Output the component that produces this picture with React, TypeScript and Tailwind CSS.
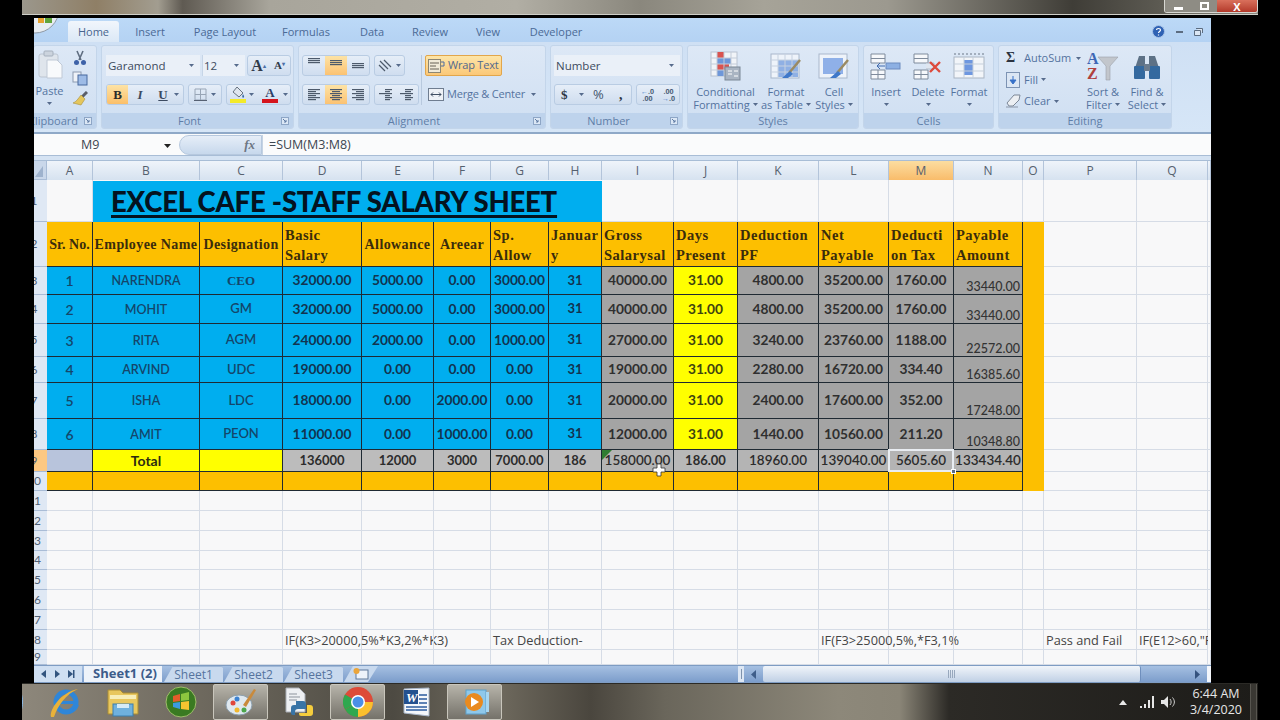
import React from 'react';

const Caret = ({ className = '' }: { className?: string }) => (
  <svg width="5" height="3" viewBox="0 0 5 3" className={className}>
    <path d="M0 0h5L2.5 3z" fill="#566b8c" />
  </svg>
);

const Launcher = () => (
  <svg width="8" height="8" viewBox="0 0 8 8">
    <rect x=".5" y=".5" width="7" height="7" fill="#dbe7f5" stroke="#8ea6c6" />
    <path d="M2 2l3 3M5 3v2H3" stroke="#5f7ba3" fill="none" />
  </svg>
);

const Group = ({
  w,
  label,
  labelClass = 'flex-1 text-center',
  launcher,
  children,
}: {
  w: string;
  label: string;
  labelClass?: string;
  launcher?: boolean;
  children: React.ReactNode;
}) => (
  <div className={`${w} flex h-[84px] shrink-0 flex-col overflow-hidden rounded-[3px] border border-[#c3d5ea] bg-gradient-to-b from-[#dde8f6] to-[#cfdff2]`}>
    <div className="h-[67px] shrink-0">{children}</div>
    <div className="flex h-[15px] items-center justify-between gap-1 bg-[#bed3ec] pt-[1px] text-[11px] text-[#5f7ea8]">
      <span className={labelClass}>{label}</span>
      {launcher && <span className="mr-1 flex"><Launcher /></span>}
    </div>
  </div>
);

// three or so horizontal strokes used by the alignment buttons
const Lines = ({ rows, dark = '#4d5a6b' }: { rows: [number, number][]; dark?: string }) => (
  <svg width="14" height="12" viewBox="0 0 14 12">
    {rows.map(([x, w], i) => (
      <rect key={i} x={x} y={i * 2} width={w} height="1.2" fill={dark} />
    ))}
  </svg>
);

const ToolBox = ({ w, children }: { w: string; children: React.ReactNode }) => (
  <div className={`${w} flex h-[21px] shrink-0 items-center overflow-hidden rounded-[3px] border border-[#b9cce3] bg-gradient-to-b from-[#e6eef8] to-[#cfddef]`}>
    {children}
  </div>
);

const Big = ({ w, l1, l2, icon, caret }: { w: string; l1: string; l2?: string; icon: React.ReactNode; caret?: boolean }) => (
  <div className={`${w} flex flex-col items-center text-[11px] leading-[13px] text-[#54739f]`}>
    <div className="flex h-[36px] items-center justify-center pb-[3px]">{icon}</div>
    <span className="whitespace-nowrap">{l1}</span>
    {l2 ? (
      <span className="flex items-center gap-[3px] whitespace-nowrap">
        {l2}
        {caret && <Caret />}
      </span>
    ) : (
      <span className="flex h-[13px] items-center"><Caret /></span>
    )}
  </div>
);

const BrushTable = ({ fill = true }: { fill?: boolean }) => (
  <svg width="32" height="28" viewBox="0 0 32 28">
    <rect x="1" y="2" width="28" height="24" fill="#eef3fa" stroke="#a9b8cc" />
    {fill ? (
      <>
        <rect x="8" y="8" width="20" height="17" fill="#8fb0e4" />
        <path d="M1 8h28M1 14h28M1 20h28M8 2v24M15 2v24M22 2v24" stroke="#c6d1e0" />
      </>
    ) : (
      <rect x="5" y="6" width="20" height="16" fill="#8fb0e8" />
    )}
    <path d="M30 8L19 21" stroke="#9a8a63" strokeWidth="2.5" />
    <path d="M20 19l3 3-5 4h-6z" fill="#3f78c9" />
  </svg>
);

const Ribbon = () => (
  <div className="flex h-[90px] shrink-0 gap-[4px] bg-gradient-to-b from-[#cfe0f4] to-[#d6e6f7] pt-[3px] text-[11px]">
    <Group w="w-[64px] -ml-[1px]" label="Clipboard" labelClass="flex w-[44px] flex-none justify-end whitespace-nowrap" launcher>
      <div className="flex h-full pt-[4px]">
        <div className="flex w-[31px] flex-col items-center text-[11px] leading-[13px] text-[#54739f]">
          <svg width="28" height="30" viewBox="0 0 28 30">
            <rect x="3" y="4" width="19" height="23" rx="2" fill="#dfe5ec" stroke="#bcc5d1" />
            <rect x="8" y="1" width="9" height="5" rx="1" fill="#ccd4de" stroke="#a6b0bd" />
            <path d="M11 10h10l5 5v13H11z" fill="#f8fafc" stroke="#c0c9d6" />
          </svg>
          <span className="mt-[4px]">Paste</span>
          <Caret className="mt-[5px]" />
        </div>
        <div className="flex flex-col items-center gap-[5px] pl-[7px]">
          <svg width="16" height="16" viewBox="0 0 16 16">
            <path d="M5 1l4 9M11 1l-4 9" stroke="#5f6d80" strokeWidth="1.6" />
            <circle cx="4.5" cy="12.5" r="2.5" fill="#3e62a8" />
            <circle cx="11.5" cy="12.5" r="2.5" fill="#3e62a8" />
          </svg>
          <svg width="16" height="15" viewBox="0 0 16 15">
            <rect x="1" y="1" width="8" height="10" fill="#eef2f8" stroke="#8b9ab0" />
            <rect x="6" y="4" width="9" height="10" fill="#9dbbe6" stroke="#47689e" />
          </svg>
          <svg width="16" height="16" viewBox="0 0 16 16">
            <path d="M15 1L9 7" stroke="#5b5f68" strokeWidth="3" />
            <path d="M9 4l4 4-4 6-8-2c3-1 5-4 8-8z" fill="#e5c65c" stroke="#a78f3a" strokeWidth=".6" />
          </svg>
        </div>
      </div>
    </Group>

    <Group w="w-[193px]" label="Font" launcher>
      <div className="flex flex-col gap-[8px] pl-[4px] pt-[9px]">
        <div className="flex gap-[2px]">
          <div className="flex h-[21px] w-[94px] items-center justify-between bg-[#eaf0f8] pl-[2px] pr-[6px] text-[11.5px] text-[#3d4b5e]">
            Garamond <Caret />
          </div>
          <div className="flex h-[21px] w-[43px] items-center justify-between border-l border-[#c6d5e7] bg-[#eaf0f8] pl-[1px] pr-[6px] text-[11.5px] text-[#3d4b5e]">
            12 <Caret />
          </div>
          <ToolBox w="w-[44px]">
            <span className="flex-1 text-center font-['Liberation_Serif',serif] text-[16px] font-bold leading-none text-[#2f3a4a]">A<sup className="text-[6px] text-[#4a6fa8]">▴</sup></span>
            <span className="flex-1 text-center font-['Liberation_Serif',serif] text-[11px] font-bold leading-none text-[#2f3a4a]">A<sup className="text-[6px] text-[#4a6fa8]">▾</sup></span>
          </ToolBox>
        </div>
        <div className="flex gap-[4px]">
          <ToolBox w="w-[78px]">
            <span className="flex h-full w-[21px] items-center justify-center bg-gradient-to-b from-[#fde3a5] to-[#fbbf69] font-['Liberation_Serif',serif] text-[13px] font-bold text-[#2c2c2c]">B</span>
            <span className="w-[24px] text-center font-['Liberation_Serif',serif] text-[13px] font-bold italic text-[#3c4a60]">I</span>
            <span className="w-[22px] text-center font-['Liberation_Serif',serif] text-[13px] font-bold text-[#3c4a60] underline">U</span>
            <Caret />
          </ToolBox>
          <ToolBox w="w-[34px]">
            <svg width="13" height="13" viewBox="0 0 13 13" className="ml-[5px] mr-[4px]">
              <path d="M1 1h11v11H1zM1 6.500h11M6.500 1v11" fill="none" stroke="#98a5b6" />
              <path d="M0 12.500h13" stroke="#566173" />
            </svg>
            <Caret />
          </ToolBox>
          <ToolBox w="w-[65px]">
            <svg width="16" height="17" viewBox="0 0 16 17" className="ml-[3px] mr-[3px]">
              <path d="M7 1l6 6-4 4-6-5z" fill="#dfe6ef" stroke="#66727f" />
              <path d="M13 8c1 2 2 3 0 4-1-1-1-2 0-4z" fill="#3a6ea8" />
              <rect x="0" y="13" width="16" height="4" fill="#f3ea29" />
            </svg>
            <Caret />
            <span className="ml-[8px] flex w-[16px] flex-col items-center font-['Liberation_Serif',serif] text-[13px] font-bold leading-[13px] text-[#2c3e66]">
              A<span className="h-[4px] w-[16px] bg-[#d5141c]" />
            </span>
            <Caret className="ml-[5px]" />
          </ToolBox>
        </div>
      </div>
    </Group>

    <Group w="w-[248px]" label="Alignment" launcher>
      <div className="flex pl-[3px] pt-[9px]">
        <div className="flex w-[117px] shrink-0 flex-col gap-[8px]">
          <div className="flex gap-[4px]">
            <ToolBox w="w-[68px]">
              <span className="flex h-full w-[22px] items-start justify-center pt-[2px]"><Lines rows={[[1, 12], [1, 12], [1, 12]]} /></span>
              <span className="flex h-full w-[23px] items-center justify-center bg-gradient-to-b from-[#fde3a5] to-[#fbc272]"><Lines rows={[[1, 12], [1, 12], [1, 12]]} /></span>
              <span className="flex h-full w-[22px] items-end justify-center"><Lines rows={[[1, 12], [1, 12], [1, 12]]} /></span>
            </ToolBox>
            <ToolBox w="w-[31px]">
              <svg width="15" height="13" viewBox="0 0 15 13" className="ml-[3px] mr-[3px]">
                <path d="M2 2l8 8M1 6l6 6M6 1l7 7" stroke="#4d5a6b" strokeWidth="1.2" />
              </svg>
              <Caret />
            </ToolBox>
          </div>
          <div className="flex gap-[4px]">
            <ToolBox w="w-[68px]">
              <span className="flex h-full w-[22px] items-center justify-center"><Lines rows={[[1, 12], [1, 8], [1, 12], [1, 8], [1, 12], [1, 8]]} /></span>
              <span className="flex h-full w-[23px] items-center justify-center bg-gradient-to-b from-[#fde3a5] to-[#fbc272]"><Lines rows={[[1, 12], [3, 8], [1, 12], [3, 8], [1, 12], [3, 8]]} /></span>
              <span className="flex h-full w-[22px] items-center justify-center"><Lines rows={[[1, 12], [5, 8], [1, 12], [5, 8], [1, 12], [5, 8]]} /></span>
            </ToolBox>
            <ToolBox w="w-[45px]">
              <span className="flex w-[22px] justify-center"><Lines rows={[[6, 7], [6, 5], [0, 13], [6, 5], [6, 7], [6, 5]]} /></span>
              <span className="flex w-[22px] justify-center"><Lines rows={[[5, 8], [5, 6], [0, 13], [5, 6], [5, 8], [5, 6]]} /></span>
            </ToolBox>
          </div>
        </div>
        <span className="ml-[2px] h-[50px] w-px shrink-0 bg-[#b8c9de]" />
        <div className="ml-[3px] flex flex-col gap-[8px]">
          <div className="flex h-[21px] w-[77px] items-center gap-[3px] rounded-[2px] border border-[#e2a64b] bg-gradient-to-b from-[#fde5a8] to-[#fbc878] pl-[2px] text-[11px] tracking-[-0.2px] text-[#51698d]">
            <svg width="17" height="14" viewBox="0 0 17 14">
              <rect x=".5" y=".5" width="12" height="13" fill="#efe9d8" stroke="#8d8672" />
              <path d="M2 4h9M2 7h6M2 10h9" stroke="#676157" />
              <path d="M13 3h3v4h-3" fill="none" stroke="#4d6da3" />
            </svg>
            Wrap Text
          </div>
          <div className="flex h-[21px] items-center gap-[3px] whitespace-nowrap pl-[3px] text-[11px] tracking-[-0.2px] text-[#54739f]">
            <svg width="16" height="13" viewBox="0 0 16 13">
              <rect x=".5" y=".5" width="15" height="12" fill="#eef1f6" stroke="#6f7d90" />
              <path d="M3 6.500h10M5 4.500L3 6.500l2 2M11 4.500l2 2-2 2" fill="none" stroke="#3f4d62" />
            </svg>
            Merge &amp; Center
            <Caret className="ml-[3px]" />
          </div>
        </div>
      </div>
    </Group>

    <Group w="w-[133px]" label="Number" launcher>
      <div className="flex flex-col gap-[8px] pl-[3px] pt-[9px]">
        <div className="flex h-[21px] w-[126px] items-center justify-between bg-[#eaf0f8] pl-[2px] pr-[6px] text-[11.5px] text-[#3d4b5e]">
          Number <Caret />
        </div>
        <div className="flex gap-[4px]">
          <ToolBox w="w-[78px]">
            <span className="ml-[6px] w-[18px] font-['Liberation_Serif',serif] text-[13px] font-bold text-[#2c3644]">$</span>
            <Caret />
            <span className="ml-[9px] w-[26px] text-[13px] text-[#41536b]">%</span>
            <span className="font-['Liberation_Serif',serif] text-[14px] font-bold text-[#2c3644]">,</span>
          </ToolBox>
          <ToolBox w="w-[44px]">
            <span className="w-[22px] text-center text-[7px] font-bold leading-[7px] text-[#4c6078]"><span className="text-[#4f80c9]">←</span>.0<br />.00</span>
            <span className="w-[22px] text-center text-[7px] font-bold leading-[7px] text-[#4c6078]">.00<br /><span className="text-[#4f80c9]">→</span>.0</span>
          </ToolBox>
        </div>
      </div>
    </Group>

    <Group w="w-[172px]" label="Styles">
      <div className="flex pl-[5px] pt-[3px]">
        <Big w="w-[65px]" l1="Conditional" l2="Formatting" caret icon={
          <svg width="32" height="30" viewBox="0 0 32 30">
            <rect x="1" y="1" width="26" height="24" fill="#f1f4f8" stroke="#b8c2d0" />
            <rect x="7" y="1" width="7" height="6" fill="#d9534f" />
            <rect x="7" y="7" width="14" height="6" fill="#6e97d9" />
            <rect x="7" y="13" width="12" height="6" fill="#d9534f" />
            <rect x="7" y="19" width="7" height="6" fill="#6e97d9" />
            <path d="M1 7h26M1 13h26M1 19h26M7 1v24M14 1v24M21 1v24" stroke="#c3ccd9" fill="none" />
            <rect x="15" y="16" width="15" height="13" fill="#a9b4c2" stroke="#7b8796" />
            <path d="M18 20h4M18 23h4M24 20h4M24 25h4" stroke="#fff" />
          </svg>
        } />
        <Big w="w-[56px]" l1="Format" l2="as Table" caret icon={<BrushTable />} />
        <Big w="w-[40px]" l1="Cell" l2="Styles" caret icon={<BrushTable fill={false} />} />
      </div>
    </Group>

    <Group w="w-[131px]" label="Cells">
      <div className="flex pl-[2px] pt-[3px]">
        <Big w="w-[40px]" l1="Insert" icon={
          <svg width="32" height="28" viewBox="0 0 32 28">
            <path d="M1 2h14v9H1zM1 6.500h14M1 18h14v9H1zM1 22.500h14M8 18v9" fill="#f6f8fb" stroke="#7f8b9c" />
            <rect x="16" y="11" width="14" height="6" fill="#8db0e3" stroke="#6d8bbf" />
            <path d="M15 14H7M10 11l-3 3 3 3" stroke="#3f6bb0" fill="none" />
          </svg>
        } />
        <Big w="w-[44px]" l1="Delete" icon={
          <svg width="32" height="28" viewBox="0 0 32 28">
            <path d="M2 2h14v9H2zM2 6.500h14M2 18h14v9H2zM2 22.500h14M9 18v9" fill="#f6f8fb" stroke="#7f8b9c" />
            <path d="M14 11h8v6h-8" fill="#dfe6f0" stroke="#aeb9c8" />
            <path d="M18 10l10 10M28 10L18 20" stroke="#dd4a3c" strokeWidth="2.4" />
          </svg>
        } />
        <Big w="w-[38px]" l1="Format" icon={
          <svg width="32" height="30" viewBox="0 0 32 30">
            <path d="M1 3h30" stroke="#6b7686" strokeDasharray="2 2" />
            <rect x="1" y="6" width="30" height="21" fill="#f2f5f9" stroke="#aab5c3" />
            <rect x="11" y="9" width="9" height="15" fill="#6e97e0" />
            <path d="M11 6v21M20 6v21M1 13h30M1 20h30" stroke="#c5cfdb" />
          </svg>
        } />
      </div>
    </Group>

    <Group w="w-[174px]" label="Editing">
      <div className="flex pl-[7px] pt-[3px]">
        <div className="flex w-[76px] flex-col gap-[3.5px] text-[11px] leading-[18px] text-[#54739f]">
          <div className="flex h-[18px] items-center">
            <span className="w-[18px] font-['Liberation_Serif',serif] text-[14px] font-bold text-[#2b3240]">Σ</span>
            AutoSum <Caret className="ml-[5px]" />
          </div>
          <div className="flex h-[18px] items-center">
            <svg width="14" height="16" viewBox="0 0 14 16" className="mr-[4px]">
              <rect x=".5" y=".5" width="13" height="15" fill="#dbe6f4" stroke="#7d93b3" />
              <path d="M7 4v6M4 8l3 4 3-4z" fill="#3771c8" stroke="#3771c8" />
            </svg>
            Fill <Caret className="ml-[3px]" />
          </div>
          <div className="flex h-[18px] items-center">
            <svg width="15" height="14" viewBox="0 0 15 14" className="mr-[3px]">
              <path d="M1 9l7-8h6l-1 5-6 6H3z" fill="#eceff3" stroke="#7c8796" />
              <path d="M0 13h12" stroke="#8a96a8" />
            </svg>
            Clear <Caret className="ml-[3px]" />
          </div>
        </div>
        <Big w="w-[42px]" l1="Sort &" l2="Filter" caret icon={
          <svg width="34" height="32" viewBox="0 0 34 32">
            <text x="1" y="14" fontFamily="Liberation Serif" fontWeight="700" fontSize="16" fill="#3e67b5">A</text>
            <text x="1" y="29" fontFamily="Liberation Serif" fontWeight="700" fontSize="16" fill="#b0413e">Z</text>
            <path d="M12 7h20l-8 9v14h-4V16z" fill="#c2c6cc" stroke="#9aa0a8" strokeWidth=".6" />
          </svg>
        } />
        <Big w="w-[46px]" l1="Find &" l2="Select" caret icon={
          <svg width="28" height="28" viewBox="0 0 28 28">
            <path d="M2 16l4-12h6v12zM16 16V4h6l4 12z" fill="#5d7186" />
            <rect x="1" y="14" width="11" height="13" rx="1" fill="#34699f" />
            <rect x="16" y="14" width="11" height="13" rx="1" fill="#34699f" />
            <rect x="11" y="12" width="6" height="7" fill="#6a7b8e" />
          </svg>
        } />
      </div>
    </Group>
  </div>
);

const colHeads = ['A', 'B', 'C', 'D', 'E', 'F', 'G', 'H', 'I', 'J', 'K', 'L', 'M', 'N', 'O', 'P', 'Q', ''];

const headers: string[][] = [
  ['Sr. No.'],
  ['Employee Name'],
  ['Designation'],
  ['Basic', 'Salary'],
  ['Allowance'],
  ['Areear'],
  ['Sp.', 'Allow'],
  ['Januar', 'y'],
  ['Gross', 'Salarysal'],
  ['Days', 'Present'],
  ['Deduction', 'PF'],
  ['Net', 'Payable'],
  ['Deducti', 'on Tax'],
  ['Payable', 'Amount'],
];

const body: { row: number; vals: string[] }[] = [
  { row: 3, vals: ['1', 'NARENDRA', 'CEO', '32000.00', '5000.00', '0.00', '3000.00', '31', '40000.00', '31.00', '4800.00', '35200.00', '1760.00', '33440.00'] },
  { row: 4, vals: ['2', 'MOHIT', 'GM', '32000.00', '5000.00', '0.00', '3000.00', '31', '40000.00', '31.00', '4800.00', '35200.00', '1760.00', '33440.00'] },
  { row: 5, vals: ['3', 'RITA', 'AGM', '24000.00', '2000.00', '0.00', '1000.00', '31', '27000.00', '31.00', '3240.00', '23760.00', '1188.00', '22572.00'] },
  { row: 6, vals: ['4', 'ARVIND', 'UDC', '19000.00', '0.00', '0.00', '0.00', '31', '19000.00', '31.00', '2280.00', '16720.00', '334.40', '16385.60'] },
  { row: 7, vals: ['5', 'ISHA', 'LDC', '18000.00', '0.00', '2000.00', '0.00', '31', '20000.00', '31.00', '2400.00', '17600.00', '352.00', '17248.00'] },
  { row: 8, vals: ['6', 'AMIT', 'PEON', '11000.00', '0.00', '1000.00', '0.00', '31', '12000.00', '31.00', '1440.00', '10560.00', '211.20', '10348.80'] },
];

const totals = ['136000', '12000', '3000', '7000.00', '186', '158000.00', '186.00', '18960.00', '139040.00', '5605.60', '133434.40'];

const plain = 'border-r border-b border-[#d6dce6]';
const dark = 'border-r border-b border-[#1f2a33]';

const RowHead = ({ n, active }: { n: number; active?: boolean }) => (
  <div className={`flex items-center overflow-hidden border-b border-[#a9bcd6] text-[12px] text-[#4f5f75] ${active ? 'bg-[#fdc882]' : 'bg-[#dfe8f4]'}`}>
    <span className="-ml-[12px] w-[24px] shrink-0 text-center">{n}</span>
  </div>
);

const Blank = ({ className = '' }: { className?: string }) => <div className={`${plain} ${className}`} />;

// spill text for row 18, runs over the next empty cells like in excel
const Spill = ({ text }: { text: string }) => (
  <div className={`${plain} flex items-center whitespace-nowrap pl-[2px] pt-[2px] font-['Open_Sans',sans-serif] text-[12.75px] text-[#444]`}>{text}</div>
);

const Sheet = () => {
  const blankRows = [11, 12, 13, 14, 15, 16, 17];
  return (
    <div className="grid h-[504px] shrink-0 grid-cols-[13px_46px_107px_83px_79px_72px_57px_58px_53px_72px_64px_81px_70px_65px_69px_21px_93px_71px_3px] grid-rows-[19px_42px_45px_28px_29px_33px_26px_36px_31px_22px_19px_20px_20px_20px_19px_20px_20px_20px_20px_15px] overflow-hidden bg-[#f8f8f9] font-['Lato',sans-serif]">
      {/* column letters */}
      <div className="flex border-b border-r border-[#a9bcd6] bg-[#c9d7ea]">
        <svg width="10" height="18" viewBox="0 0 10 18"><path d="M9 5v11H1z" fill="#9eb2cd" /></svg>
      </div>
      {colHeads.map((c, i) => (
        <div
          key={i}
          className={`flex items-center justify-center border-r border-[#b3c4da] font-['Open_Sans',sans-serif] text-[12px] text-[#55606e] ${c === 'M' ? 'bg-gradient-to-b from-[#fbdda0] to-[#f9bc6a]' : 'bg-gradient-to-b from-[#eff4fa] to-[#d6e2f0]'}`}
        >
          {c}
        </div>
      ))}

      {/* row 1, title */}
      <RowHead n={1} />
      <Blank />
      <div className="col-span-7 mt-[1px] flex items-center bg-[#00aeef] pl-[18px] text-[27.5px] font-black leading-none tracking-[-0.2px] text-[#041320]">
        <span className="whitespace-nowrap underline decoration-[3px] underline-offset-[3px]">EXCEL CAFE -STAFF SALARY SHEET</span>
      </div>
      {Array.from({ length: 10 }, (_, i) => <Blank key={i} />)}

      {/* row 2, headers */}
      <RowHead n={2} />
      {headers.map((h, i) => (
        <div
          key={i}
          className={`${dark} flex flex-col justify-center overflow-hidden bg-[#fdbf00] pt-[2px] font-['Liberation_Serif',serif] font-bold leading-[20px] text-[#3a2c0c] ${h.length === 1 ? `items-center whitespace-nowrap text-[14px] ${i === 0 ? '' : 'tracking-[0.4px]'}` : 'items-start pl-[2px] text-[14.5px] tracking-[0.5px]'}`}
        >
          {h.map((t) => <span key={t} className="whitespace-nowrap">{t}</span>)}
        </div>
      ))}
      <div className="row-span-9 bg-[#fdbf00]" />
      <Blank />
      <Blank />
      <Blank />

      {/* rows 3 - 8 */}
      {body.map(({ row, vals }) => (
        <React.Fragment key={row}>
          <RowHead n={row} />
          {vals.map((v, i) => {
            if (i < 3)
              return (
                <div key={i} className={`${dark} flex items-center justify-center bg-[#00aeef] font-semibold text-[#14466b] ${i === 0 ? 'text-[14px] font-bold' : i === 1 ? 'pt-[2px] text-[12.5px]' : 'text-[13px]'}`}>
                  {v === 'CEO' ? <b className="font-['Liberation_Serif',serif] text-[13px]">{v}</b> : v}
                </div>
              );
            if (i < 8)
              return (
                <div key={i} className={`${dark} flex items-center justify-center whitespace-nowrap bg-[#00aeef] font-bold text-[#12344f] ${i === 7 ? 'text-[13px]' : 'text-[13.75px]'}`}>
                  {v}
                </div>
              );
            if (i === 9)
              return (
                <div key={i} className={`${dark} flex items-center justify-center bg-[#ffff00] text-[13.75px] font-bold text-[#3e4410]`}>{v}</div>
              );
            if (i === 13)
              return (
                <div key={i} className={`${dark} flex items-end justify-end bg-[#a4a4a4] pr-[2px] text-[12.5px] font-medium leading-[14px] text-[#333]`}>{v}</div>
              );
            return (
              <div key={i} className={`${dark} flex items-center justify-center whitespace-nowrap bg-[#a4a4a4] text-[13.75px] font-bold text-[#2f2f2f]`}>{v}</div>
            );
          })}
          <Blank />
          <Blank />
          <Blank />
        </React.Fragment>
      ))}

      {/* row 9, totals */}
      <RowHead n={9} active />
      <div className={`${dark} bg-[#b8c4dc]`} />
      <div className={`${dark} flex items-center justify-center bg-[#ffff00] text-[14px] font-bold text-[#2d2d10]`}>Total</div>
      <div className={`${dark} bg-[#ffff00]`} />
      {totals.map((t, i) => (
        <div
          key={i}
          className={`${dark} relative flex items-center justify-center whitespace-nowrap text-[#2c2c2c] ${i < 5 ? 'bg-[#bcbcbc] text-[13px] font-bold' : i === 6 ? 'bg-[#b8b8b8] text-[13px] font-bold' : 'bg-[#b4b4b4] text-[13.5px] font-semibold'}`}
        >
          {t}
          {i === 5 && (
            <>
              <span className="absolute left-0 top-0 h-0 w-0 border-l-[5px] border-t-[5px] border-r-transparent border-b-transparent border-l-[#2f7d32] border-t-[#2f7d32] [border-right-width:5px] [border-bottom-width:5px]" />
              <svg width="14" height="14" viewBox="0 0 14 14" className="absolute left-[50px] top-[13px] z-10">
                <path d="M5 1h4v4h4v4H9v4H5V9H1V5h4z" fill="#fff" stroke="#333" strokeWidth=".8" />
              </svg>
            </>
          )}
          {i === 9 && (
            <>
              <span className="absolute -bottom-px -left-px -right-px -top-px border-2 border-[#e9edf2]" />
              <span className="absolute -bottom-[3px] -right-[3px] z-10 h-[5px] w-[5px] border border-white bg-[#5a6b86]" />
            </>
          )}
        </div>
      ))}
      <Blank />
      <Blank />
      <Blank />

      {/* row 10, orange band */}
      <RowHead n={10} />
      {Array.from({ length: 14 }, (_, i) => <div key={i} className={`${dark} bg-[#fdbf00]`} />)}
      <Blank />
      <Blank />
      <Blank />

      {blankRows.map((r) => (
        <React.Fragment key={r}>
          <RowHead n={r} />
          {Array.from({ length: 18 }, (_, i) => <Blank key={i} />)}
        </React.Fragment>
      ))}

      {/* row 18, notes */}
      <RowHead n={18} />
      <Blank /><Blank /><Blank />
      <Spill text="IF(K3>20000,5%*K3,2%*K3)" />
      <Blank /><Blank />
      <Spill text="Tax Deduction-" />
      <Blank /><Blank /><Blank /><Blank />
      <Spill text="IF(F3>25000,5%,*F3,1%" />
      <Blank /><Blank /><Blank />
      <Spill text="Pass and Fail" />
      <Spill text={'IF(E12>60,"Pass","Fail")'} />
      <div className="z-10 bg-[#f8f8f9]" />

      <RowHead n={19} />
      {Array.from({ length: 18 }, (_, i) => <Blank key={i} />)}
    </div>
  );
};

const SheetTab = ({ name, w }: { name: string; w: string }) => (
  <div className={`${w} flex h-[16px] items-center justify-center rounded-t-[2px] border-t border-[#9fb7d6] bg-[#c8d9ee] text-[12px] text-[#55739d] [clip-path:polygon(9px_0,100%_0,100%_100%,0_100%)]`}>
    {name}
  </div>
);

const SheetBar = () => (
  <div className="flex h-[18px] shrink-0 items-stretch border-t border-b border-[#7e9cc3] bg-gradient-to-b from-[#a6c0e2] to-[#7c9dcb] text-[#44628f]">
    <div className="flex w-[48px] items-center justify-center gap-[7px] bg-[#cfdff2] text-[#33557f]">
      <svg width="6" height="8" viewBox="0 0 6 8"><path d="M5 0v8L0 4z" fill="currentColor" /></svg>
      <svg width="6" height="8" viewBox="0 0 6 8"><path d="M1 0v8l5-4z" fill="currentColor" /></svg>
      <svg width="8" height="8" viewBox="0 0 8 8"><path d="M1 0v8l5-4zM6 0h1.500v8H6z" fill="currentColor" /></svg>
    </div>
    <div className="ml-[2px] flex w-[78px] items-center justify-center bg-[#eef3fa] pl-[4px] text-[13px] font-bold text-[#3c5c8a]">Sheet1 (2)</div>
    <div className="ml-[2px] flex items-center gap-[1px]">
      <SheetTab name="Sheet1" w="w-[59px]" />
      <SheetTab name="Sheet2" w="w-[59px]" />
      <SheetTab name="Sheet3" w="w-[59px]" />
      <div className="flex h-[16px] w-[34px] items-center justify-center bg-[#c8d9ee] [clip-path:polygon(9px_0,100%_0,calc(100%-10px)_100%,0_100%)]">
        <svg width="16" height="12" viewBox="0 0 16 12">
          <rect x="3" y="2" width="12" height="9" fill="#eef3fa" stroke="#5f7899" />
          <circle cx="3.500" cy="3" r="3" fill="#eba53a" />
        </svg>
      </div>
    </div>
    <div className="flex-1" />
    <div className="flex w-[6px] items-center justify-center bg-[#dde7f4]"><span className="h-[10px] w-px bg-[#7f93ad]" /></div>
    <div className="flex w-[19px] items-center justify-center">
      <svg width="6" height="9" viewBox="0 0 6 9"><path d="M5 0v9L0 4.500z" fill="#3f5e8a" /></svg>
    </div>
    <div className="flex w-[378px] items-center justify-center rounded-[2px] border-r border-[#6f8fbd] bg-gradient-to-b from-[#f1f5fa] to-[#c0d0e5]">
      <span className="h-[8px] w-[7px] bg-[repeating-linear-gradient(90deg,#98a8bd_0,#98a8bd_1px,transparent_1px,transparent_2px)]" />
    </div>
    <div className="flex w-[66px] items-center justify-end pr-[7px]">
      <svg width="6" height="9" viewBox="0 0 6 9"><path d="M1 0v9l5-4.500z" fill="#34527e" /></svg>
    </div>
    <div className="w-[4px] bg-[#f3f6fb]" />
  </div>
);

const Slot = ({ w, active, children }: { w: string; active?: boolean; children: React.ReactNode }) => (
  <div className={`${w} flex h-full shrink-0 items-center justify-center ${active ? 'rounded-[2px] border border-[#c9c6bc] bg-gradient-to-b from-[#b7b4aa] to-[#75726a]' : ''}`}>
    {children}
  </div>
);

const Taskbar = () => (
  <div className="ml-[22px] flex h-[37px] w-[1236px] shrink-0 items-center overflow-hidden border-t border-[#2b2a26] bg-[linear-gradient(90deg,#8d877b_0%,#6f6a5f_14%,#4d4a42_30%,#716c60_38%,#4a463e_46%,#6a665b_52%,#8d887a_66%,#8a8577_71%,#2c2a26_75%,#1d1c19_100%)] font-['Open_Sans',sans-serif]">
    <div className="flex h-full w-[14px] shrink-0 items-center">
      <span className="-ml-[24px] h-[30px] w-[25px] rounded-full border border-[#8fb8df] bg-[#3f78ad]" />
    </div>
    <Slot w="w-[58px]">
      <svg width="32" height="32" viewBox="0 0 32 32">
        <circle cx="17" cy="16" r="10" fill="none" stroke="#2f86d8" strokeWidth="5" />
        <rect x="9" y="15" width="17" height="3" fill="#2f86d8" />
        <path d="M26 19h4c-2 6-7 9-12 9 4-1 7-4 8-9z" fill="#2f86d8" />
        <path d="M2 31C0 24 12 6 29 3c-12 5-20 16-24 28z" fill="#e8b23a" />
      </svg>
    </Slot>
    <Slot w="w-[58px]">
      <svg width="32" height="30" viewBox="0 0 32 30">
        <path d="M1 3h12l3 3h15v21H1z" fill="#e8c75e" stroke="#a98c34" />
        <rect x="3" y="8" width="26" height="4" fill="#f7eeb9" />
        <rect x="6" y="17" width="20" height="12" fill="#6fb1dd" stroke="#3b7fae" />
        <rect x="10" y="17" width="12" height="4" fill="#d5ebf7" />
      </svg>
    </Slot>
    <Slot w="w-[58px]">
      <svg width="32" height="32" viewBox="0 0 32 32">
        <circle cx="16" cy="16" r="15" fill="#3a7a22" stroke="#9fbd6b" />
        <path d="M8 10l7-2v7l-7 1z" fill="#e45c2a" />
        <path d="M16 8l8-2v8l-8 1z" fill="#8cc63f" />
        <path d="M8 17l7-1v7l-7-2z" fill="#3b9be0" />
        <path d="M16 16l8-1v9l-8-1z" fill="#f4c430" />
      </svg>
    </Slot>
    <Slot w="ml-[3px] w-[55px]" active>
      <svg width="32" height="30" viewBox="0 0 32 30">
        <ellipse cx="14" cy="18" rx="13" ry="10" fill="#dfe8ef" stroke="#8da0ae" />
        <circle cx="8" cy="16" r="2.500" fill="#e0463c" />
        <circle cx="12" cy="23" r="2.500" fill="#f1b82e" />
        <circle cx="19" cy="23" r="2.500" fill="#4ca64c" />
        <circle cx="12" cy="12" r="2.500" fill="#3c82d1" />
        <path d="M18 18L29 2l2 1-10 17z" fill="#c98a3c" />
      </svg>
    </Slot>
    <Slot w="w-[62px]">
      <svg width="30" height="30" viewBox="0 0 30 30">
        <path d="M2 1h13l6 6v18H2z" fill="#eef0f3" stroke="#a9aeb6" />
        <path d="M5 7h8M5 10h11M5 13h8" stroke="#8d939c" />
        <path d="M12 14h7a3 3 0 013 3v5h-8a3 3 0 00-3 3v3H9a2 2 0 01-2-2v-5a3 3 0 013-3h2z" fill="#3874a6" />
        <path d="M23 18h3a3 3 0 013 3v5a3 3 0 01-3 3h-9a2 2 0 01-2-2v-1h8z" fill="#f5cd3d" />
      </svg>
    </Slot>
    <Slot w="w-[55px]" active>
      <svg width="30" height="30" viewBox="0 0 30 30">
        <circle cx="15" cy="15" r="15" fill="#dd4b39" />
        <path d="M15 15L2 22.500A15 15 0 0015 30z" fill="#2fa84f" />
        <path d="M15 15l0 15A15 15 0 0030 15z" fill="#fbc02d" />
        <path d="M2 22.500A15 15 0 012 7.500L15 15z" fill="#2fa84f" />
        <circle cx="15" cy="15" r="7" fill="#fff" />
        <circle cx="15" cy="15" r="5.500" fill="#4a8fe7" />
      </svg>
    </Slot>
    <Slot w="w-[62px]">
      <svg width="30" height="30" viewBox="0 0 30 30">
        <path d="M3 2l25-1v28L3 26z" fill="#f4f7fb" stroke="#a8b6c9" />
        <path d="M3 3h14v14H3z" fill="#24518f" />
        <text x="5" y="15" fontFamily="Liberation Serif" fontStyle="italic" fontWeight="700" fontSize="13" fill="#fff">W</text>
        <path d="M18 8h8M18 12h8M18 16h8M5 20h21M5 23h21" stroke="#2b5c9e" strokeWidth="1.500" />
      </svg>
    </Slot>
    <Slot w="w-[55px]" active>
      <svg width="32" height="30" viewBox="0 0 32 30">
        <rect x="7" y="3" width="20" height="24" fill="#8fc8ea" stroke="#5c9fca" />
        <rect x="27" y="5" width="3" height="20" fill="#a8d6f0" />
        <circle cx="15" cy="15" r="9" fill="#e98a1f" />
        <path d="M12 10l8 5-8 5z" fill="#fff" />
      </svg>
    </Slot>
    <div className="flex-1" />
    <svg width="8" height="5" viewBox="0 0 8 5" className="mr-[12px]"><path d="M0 5l4-5 4 5z" fill="#e8e8e8" /></svg>
    <svg width="16" height="12" viewBox="0 0 16 12" className="mr-[5px]">
      <path d="M1 10h2v2H1zM5 8h2v4H5zM9 4h2v8H9zM13 0h2v12h-2z" fill="#e6e6e6" />
    </svg>
    <svg width="16" height="14" viewBox="0 0 16 14" className="mr-[13px]">
      <path d="M1 5h3l4-4v12l-4-4H1z" fill="#e6e6e6" />
      <path d="M10 4c1.500 2 1.500 4 0 6M12.500 2.500c2.500 3 2.500 6 0 9" stroke="#d0d0d0" fill="none" />
    </svg>
    <div className="flex w-[54px] flex-col items-center text-[12.5px] leading-[16px] text-[#e6e6e6]">
      <span className="whitespace-nowrap">6:44 AM</span>
      <span className="whitespace-nowrap">3/4/2020</span>
    </div>
    <span className="ml-[7px] mr-[1px] h-full w-[7px] border-x border-[#57554f] bg-[#3a3833]" />
  </div>
);

export default function App() {
  return (
    <div className="flex h-[720px] w-[1280px] flex-col overflow-hidden bg-black font-['Open_Sans',sans-serif]">
      {/* desktop wallpaper above the window */}
      <div className="ml-[22px] flex h-[15px] w-[1236px] shrink-0 justify-end border-b border-[#cfcfc8] bg-[linear-gradient(90deg,#9b978c_0%,#8f7f66_6%,#a29d90_11%,#5f5a52_13%,#a8a59b_20%,#b1aea4_40%,#8a877d_50%,#a6a398_60%,#9c998f_70%,#3f3d37_85%,#5c5a52_92%,#8d8a80_100%)]">
        <div className="flex h-[13px] w-[94px] overflow-hidden rounded-b-[3px] border border-t-0 border-[#d7d7d2] text-white">
          <div className="flex w-[27px] items-end justify-center bg-[#8e8c84] pb-[2px]"><span className="h-[3px] w-[9px] bg-white" /></div>
          <div className="flex w-[25px] items-center justify-center bg-[#8e8c84]"><span className="h-[8px] w-[9px] border-2 border-white" /></div>
          <div className="flex flex-1 items-center justify-center bg-gradient-to-b from-[#d9705c] to-[#b3392a] text-[11px] font-bold leading-none">X</div>
        </div>
      </div>

      <div className="ml-[34px] mt-[3px] flex h-[665px] w-[1177px] shrink-0 flex-col overflow-hidden">
        {/* ribbon tabs */}
        <div className="flex h-[24px] shrink-0 items-end bg-gradient-to-b from-[#bcd9f7] to-[#b4d2f3] text-[11px] text-[#4b6a96]">
          <div className="h-full w-[34px] shrink-0 self-start">
            <svg width="34" height="24" viewBox="0 0 34 24">
              <circle cx="1" cy="-9" r="24" fill="#e8edf2" stroke="#8f9aa6" />
              <rect x="4" y="0" width="6" height="5" fill="#e6a22f" />
              <rect x="11" y="0" width="7" height="5" fill="#5fa53c" />
            </svg>
          </div>
          <div className="flex h-[21px] w-[51px] items-center justify-center rounded-t-[3px] bg-gradient-to-b from-[#f1f6fc] to-[#dbe8f6] pt-[1px] text-[#47658f]">Home</div>
          <div className="flex h-[21px] w-[62px] items-center justify-center pt-[1px]">Insert</div>
          <div className="flex h-[21px] w-[88px] items-center justify-center pt-[1px]">Page Layout</div>
          <div className="flex h-[21px] w-[74px] items-center justify-center pt-[1px]">Formulas</div>
          <div className="flex h-[21px] w-[58px] items-center justify-center pt-[1px]">Data</div>
          <div className="flex h-[21px] w-[58px] items-center justify-center pt-[1px]">Review</div>
          <div className="flex h-[21px] w-[58px] items-center justify-center pt-[1px]">View</div>
          <div className="flex h-[21px] w-[78px] items-center justify-center pt-[1px]">Developer</div>
          <div className="flex-1" />
          <div className="flex h-[21px] items-center gap-[11px] pr-[8px]">
            <svg width="13" height="13" viewBox="0 0 13 13">
              <circle cx="6.500" cy="6.500" r="6" fill="#2f62b4" stroke="#a9c4e8" />
              <path d="M4.500 5c0-2 4-2 4 0 0 1.500-2 1.500-2 3M6.500 9.500v1" stroke="#fff" strokeWidth="1.200" fill="none" />
            </svg>
            <span className="h-[2px] w-[7px] bg-[#5c6c80]" />
            <svg width="9" height="8" viewBox="0 0 9 8"><path d="M2 .5h6.500V5M.5 2.500h6v5h-6z" fill="#dbe6f3" stroke="#5c6c80" /></svg>
          </div>
        </div>

        <Ribbon />

        <div className="h-[2px] shrink-0 bg-[#8fa9c8]" />

        {/* formula bar */}
        <div className="flex h-[21px] shrink-0 items-center bg-[#fafbfc] pt-[1px] text-[12px] text-[#3d4650]">
          <div className="relative flex h-full w-[139px] items-center pl-[47px] text-[12.5px]">
            M9
            <svg width="7" height="4" viewBox="0 0 7 4" className="absolute right-[2px] top-[9px]"><path d="M0 0h7L3.500 4z" fill="#222" /></svg>
          </div>
          <div className="ml-[6px] flex h-full w-[83px] items-center justify-end rounded-l-full border border-[#b6c8de] bg-gradient-to-b from-[#e6eef8] to-[#c7d8ec] pr-[6px]">
            <span className="font-['Liberation_Serif',serif] text-[13px] font-bold italic text-[#6d7683]">fx</span>
          </div>
          <div className="flex h-full flex-1 items-center border-l border-[#c5d3e3] pl-[6px] text-[12.5px]">=SUM(M3:M8)</div>
        </div>
        <div className="h-[6px] shrink-0 border-y border-[#a8bdd6] bg-[#d5e3f3]" />

        <Sheet />
        <SheetBar />
      </div>

      <Taskbar />
    </div>
  );
}
